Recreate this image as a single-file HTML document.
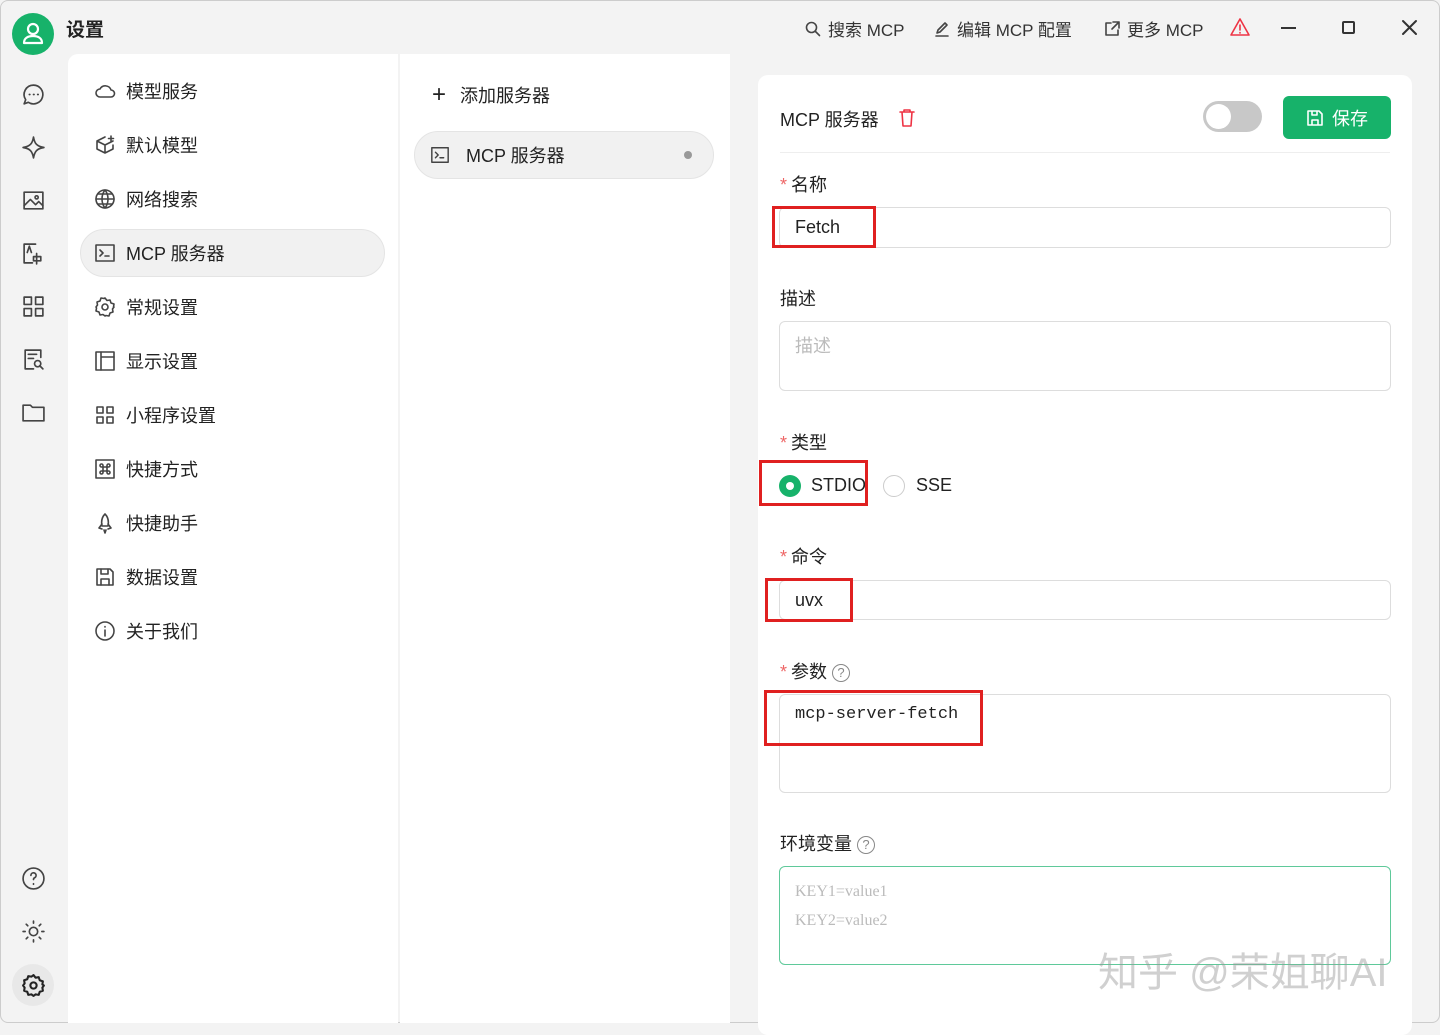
<!DOCTYPE html>
<html><head><meta charset="utf-8"><style>
*{box-sizing:border-box;margin:0;padding:0}
body{width:1440px;height:1023px;overflow:hidden;background:#f3f3f3;font-family:"Liberation Sans","Noto Sans CJK SC",sans-serif;color:#222;position:relative}
.abs{position:absolute}
svg{fill:none;stroke:#444;stroke-width:1.6;stroke-linecap:round;stroke-linejoin:round}
.nav{left:68px;top:54px;width:330px;height:969px;background:#fff;border-top-left-radius:10px}
.mid{left:400px;top:54px;width:330px;height:969px;background:#fff}
.card{left:758px;top:75px;width:654px;height:960px;background:#fff;border-radius:10px}
.ni{position:absolute;left:94px;font-size:18px;display:flex;align-items:center;gap:10px;height:24px}
.ni svg{width:22px;height:22px}
.lbl{position:absolute;left:780px;font-size:18px;color:#222}
.star{color:#e66;margin-right:4px}
.inp{position:absolute;left:779px;width:612px;border:1px solid #ddd;border-radius:6px;background:#fff}
.red{position:absolute;border:3px solid #e02020}
.top{font-size:17px;color:#333;display:flex;align-items:center;gap:6px}
</style></head><body>
<div class="abs" style="left:0;top:0;width:1440px;height:1023px;border:1px solid #ccc;border-radius:8px;pointer-events:none"></div>
<!-- avatar -->
<div class="abs" style="left:12px;top:13px;width:42px;height:42px;border-radius:50%;background:#17b26a"></div>
<svg class="abs" style="left:20px;top:20px;width:26px;height:26px;stroke:#fff;stroke-width:2.2" viewBox="0 0 26 26"><circle cx="13" cy="9" r="5"/><path d="M4 23c0-5 4-7 9-7s9 2 9 7z"/></svg>
<div class="abs" style="left:66px;top:15px;font-size:19px;font-weight:bold">设置</div>
<!-- top right -->
<div class="abs top" style="left:804px;top:16px"><svg width="18" height="18" viewBox="0 0 18 18"><circle cx="7.5" cy="7.5" r="5"/><path d="M11.5 11.5l4 4"/></svg>搜索 MCP</div>
<div class="abs top" style="left:933px;top:16px"><svg width="18" height="18" viewBox="0 0 18 18"><path d="M4 13l1-3 7-7 2 2-7 7zM3 16h12"/></svg>编辑 MCP 配置</div>
<div class="abs top" style="left:1103px;top:16px"><svg width="18" height="18" viewBox="0 0 18 18"><path d="M8 3H3v12h12v-5M10 2h6v6M16 2l-7 7"/></svg>更多 MCP</div>
<svg class="abs" style="left:1229px;top:17px;width:22px;height:20px;stroke:#e34" viewBox="0 0 22 20"><path d="M11 2l9 16H2z M11 8v5M11 15.5v.5"/></svg>
<div class="abs" style="left:1281px;top:27px;width:15px;height:2px;background:#333"></div>
<div class="abs" style="left:1342px;top:21px;width:13px;height:13px;border:2px solid #333;border-radius:2px"></div>
<svg class="abs" style="left:1401px;top:19px;width:17px;height:17px;stroke:#333;stroke-width:2" viewBox="0 0 17 17"><path d="M2 2l13 13M15 2L2 15"/></svg>
<!-- left icons -->
<svg class="abs" style="left:21px;top:82px;width:25px;height:25px" viewBox="0 0 24 24"><path d="M12 3a9 9 0 1 1-5 16.5L3 21l1.5-4A9 9 0 0 1 12 3z"/><path d="M8 12h.5M12 12h.5M16 12h.5"/></svg>
<svg class="abs" style="left:21px;top:135px;width:25px;height:25px" viewBox="0 0 24 24"><path d="M12 2c1 6 3 9 10 10-7 1-9 4-10 10-1-6-3-9-10-10 7-1 9-4 10-10z"/></svg>
<svg class="abs" style="left:21px;top:188px;width:25px;height:25px" viewBox="0 0 24 24"><rect x="3" y="4" width="18" height="16"/><path d="M3 17l6-6 5 5 3-3 4 4"/><circle cx="15" cy="9" r="1.5"/></svg>
<svg class="abs" style="left:21px;top:241px;width:25px;height:25px" viewBox="0 0 24 24"><path d="M14 3H3v18h8"/><path d="M6 11l2-6 2 6M15 12v10M12 15h7v4h-7z"/></svg>
<svg class="abs" style="left:21px;top:294px;width:25px;height:25px" viewBox="0 0 24 24"><rect x="3" y="3" width="7" height="7"/><rect x="14" y="3" width="7" height="7"/><rect x="3" y="14" width="7" height="7"/><rect x="14" y="14" width="7" height="7"/></svg>
<svg class="abs" style="left:21px;top:347px;width:25px;height:25px" viewBox="0 0 24 24"><path d="M19 10V3H4v18h8"/><path d="M7 7h8M7 11h5"/><circle cx="16" cy="16" r="3"/><path d="M18 18l3 3"/></svg>
<svg class="abs" style="left:21px;top:400px;width:25px;height:25px" viewBox="0 0 24 24"><path d="M2 5h7l2 2h11v13H2z"/></svg>
<svg class="abs" style="left:21px;top:866px;width:25px;height:25px" viewBox="0 0 24 24"><circle cx="12" cy="12" r="10"/><path d="M9.5 9a2.5 2.5 0 1 1 3.5 2.3c-.7.4-1 1-1 1.7M12 17v.5"/></svg>
<svg class="abs" style="left:21px;top:919px;width:25px;height:25px" viewBox="0 0 24 24"><circle cx="12" cy="12" r="4"/><path d="M12 2v2M12 20v2M2 12h2M20 12h2M5 5l1.5 1.5M17.5 17.5L19 19M5 19l1.5-1.5M17.5 6.5L19 5"/></svg>
<div class="abs" style="left:12px;top:964px;width:42px;height:42px;border-radius:50%;background:#e8e8e8"></div>
<svg class="abs" style="left:21px;top:973px;width:25px;height:25px;stroke:#222;stroke-width:2" viewBox="0 0 24 24"><circle cx="12" cy="12" r="3"/><path d="M12 2l2 2.5 3-.5 1 3 3 1-.5 3L22 12l-1.5 2 .5 3-3 1-1 3-3-.5L12 22l-2-1.5-3 .5-1-3-3-1 .5-3L2 12l1.5-2-.5-3 3-1 1-3 3 .5z"/></svg>
<!-- nav -->
<div class="abs nav"></div>
<div class="abs" style="left:80px;top:229px;width:305px;height:48px;background:#f1f1f1;border:1px solid #e4e4e4;border-radius:24px"></div>
<div class="ni" style="top:79px"><svg viewBox="0 0 22 22"><path d="M6 17a4 4 0 0 1 0-8 6 6 0 0 1 11 1 3.5 3.5 0 0 1 0 7z"/></svg>模型服务</div>
<div class="ni" style="top:133px"><svg viewBox="0 0 22 22"><path d="M11 3L3 7v8l8 4 8-4v-4M3 7l8 4 8-4M11 11v8M17 2v5M14.5 4.5h5"/></svg>默认模型</div>
<div class="ni" style="top:187px"><svg viewBox="0 0 22 22"><circle cx="11" cy="11" r="9"/><path d="M2 11h18M11 2c-4 5-4 13 0 18M11 2c4 5 4 13 0 18M4 6h14M4 16h14"/></svg>网络搜索</div>
<div class="ni" style="top:241px"><svg viewBox="0 0 22 22"><rect x="2" y="3" width="18" height="16"/><path d="M6 8l3 3-3 3M11 14h4"/></svg>MCP 服务器</div>
<div class="ni" style="top:295px"><svg viewBox="0 0 22 22"><circle cx="11" cy="11" r="3"/><path d="M11 2l2 2.5 3-.5 1 3 3 1-.5 3L20 11l-1.5 2 .5 3-3 1-1 3-3-.5L11 20l-2-1.5-3 .5-1-3-3-1 .5-3L2 11l1.5-2-.5-3 3-1 1-3 3 .5z"/></svg>常规设置</div>
<div class="ni" style="top:349px"><svg viewBox="0 0 22 22"><rect x="2" y="2" width="18" height="18"/><path d="M7 2v18M7 7h13"/></svg>显示设置</div>
<div class="ni" style="top:403px"><svg viewBox="0 0 22 22"><rect x="3" y="3" width="6" height="6"/><rect x="13" y="3" width="6" height="6"/><rect x="3" y="13" width="6" height="6"/><rect x="13" y="13" width="6" height="6"/></svg>小程序设置</div>
<div class="ni" style="top:457px"><svg viewBox="0 0 22 22"><rect x="2" y="2" width="18" height="18"/><path d="M9 9h4v4H9zM9 9H7.5a1.5 1.5 0 1 1 1.5-1.5zM13 9V7.5A1.5 1.5 0 1 1 14.5 9zM9 13v1.5A1.5 1.5 0 1 1 7.5 13zM13 13h1.5a1.5 1.5 0 1 1-1.5 1.5z"/></svg>快捷方式</div>
<div class="ni" style="top:511px"><svg viewBox="0 0 22 22"><path d="M11 2c-3 3-4 7-3 12h6c1-5 0-9-3-12zM8 12l-3 4 3 1M14 12l3 4-3 1M10 18l1 3 1-3"/></svg>快捷助手</div>
<div class="ni" style="top:565px"><svg viewBox="0 0 22 22"><path d="M3 3h13l3 3v13H3z"/><path d="M7 3v5h7V3M7 19v-6h8v6"/></svg>数据设置</div>
<div class="ni" style="top:619px"><svg viewBox="0 0 22 22"><circle cx="11" cy="11" r="9"/><path d="M11 10v6M11 6.5v.5"/></svg>关于我们</div>
<!-- mid -->
<div class="abs mid"></div>
<div class="abs" style="left:432px;top:82px;font-size:18px;display:flex;align-items:center;gap:14px"><span style="font-size:24px;font-weight:300;line-height:20px">+</span>添加服务器</div>
<div class="abs" style="left:414px;top:131px;width:300px;height:48px;background:#f1f1f1;border:1px solid #e4e4e4;border-radius:24px"></div>
<div class="ni" style="left:430px;top:143px;gap:16px"><svg viewBox="0 0 22 22" style="width:20px;height:20px"><rect x="2" y="3" width="18" height="16"/><path d="M6 8l3 3-3 3M11 14h4"/></svg>MCP 服务器</div>
<div class="abs" style="left:684px;top:151px;width:8px;height:8px;border-radius:50%;background:#999"></div>
<!-- card -->
<div class="abs card"></div>
<div class="abs" style="left:780px;top:106px;font-size:18px">MCP 服务器</div>
<svg class="abs" style="left:898px;top:108px;width:18px;height:20px;stroke:#e34" viewBox="0 0 18 20"><path d="M2 4h14M6 4V2h6v2M4 4l1 14h8l1-14"/></svg>
<div class="abs" style="left:1203px;top:101px;width:59px;height:31px;border-radius:16px;background:#c8c8c8"></div>
<div class="abs" style="left:1206px;top:104px;width:25px;height:25px;border-radius:50%;background:#fff"></div>
<div class="abs" style="left:1283px;top:96px;width:108px;height:43px;border-radius:6px;background:#17b26a;color:#fff;font-size:18px;display:flex;align-items:center;justify-content:center;gap:8px"><svg width="18" height="18" viewBox="0 0 18 18" style="stroke:#fff"><path d="M2 2h11l3 3v11H2z M6 2v4h5V2M6 11h6v5H6z"/></svg>保存</div>
<div class="abs" style="left:780px;top:152px;width:610px;height:1px;background:#eee"></div>
<div class="lbl" style="top:171px"><span class="star">*</span>名称</div>
<div class="inp" style="top:207px;height:41px"></div>
<div class="abs" style="left:795px;top:217px;font-size:18px">Fetch</div>
<div class="red" style="left:772px;top:206px;width:104px;height:42px"></div>
<div class="lbl" style="top:285px">描述</div>
<div class="inp" style="top:321px;height:70px"></div>
<div class="abs" style="left:795px;top:332px;font-size:18px;color:#bbb">描述</div>
<div class="lbl" style="top:429px"><span class="star">*</span>类型</div>
<div class="abs" style="left:779px;top:475px;width:22px;height:22px;border-radius:50%;background:#17b26a"></div>
<div class="abs" style="left:786px;top:482px;width:8px;height:8px;border-radius:50%;background:#fff"></div>
<div class="abs" style="left:811px;top:475px;font-size:18px">STDIO</div>
<div class="abs" style="left:883px;top:475px;width:22px;height:22px;border-radius:50%;border:1px solid #ccc"></div>
<div class="abs" style="left:916px;top:475px;font-size:18px">SSE</div>
<div class="red" style="left:759px;top:460px;width:109px;height:46px"></div>
<div class="lbl" style="top:543px"><span class="star">*</span>命令</div>
<div class="inp" style="top:580px;height:40px"></div>
<div class="abs" style="left:795px;top:590px;font-size:18px">uvx</div>
<div class="red" style="left:765px;top:578px;width:88px;height:44px"></div>
<div class="lbl" style="top:658px"><span class="star">*</span>参数 <span style="display:inline-block;width:18px;height:18px;border:1.5px solid #888;border-radius:50%;font-size:13px;text-align:center;line-height:15px;color:#888;vertical-align:1px">?</span></div>
<div class="inp" style="top:694px;height:99px"></div>
<div class="abs" style="left:795px;top:705px;font-size:17px;font-family:'Liberation Mono',monospace">mcp-server-fetch</div>
<div class="red" style="left:764px;top:690px;width:219px;height:56px"></div>
<div class="lbl" style="top:830px">环境变量 <span style="display:inline-block;width:18px;height:18px;border:1.5px solid #888;border-radius:50%;font-size:13px;text-align:center;line-height:15px;color:#888;vertical-align:1px">?</span></div>
<div class="inp" style="top:866px;height:99px;border-color:#5fc99a"></div>
<div class="abs" style="left:795px;top:877px;font-size:16px;color:#bbb;font-family:'Liberation Serif',serif;line-height:29px">KEY1=value1<br>KEY2=value2</div>
<div class="abs" style="left:1098px;top:940px;font-size:40px;color:rgba(150,150,150,.45)">知乎 @荣姐聊AI</div>
</body></html>
